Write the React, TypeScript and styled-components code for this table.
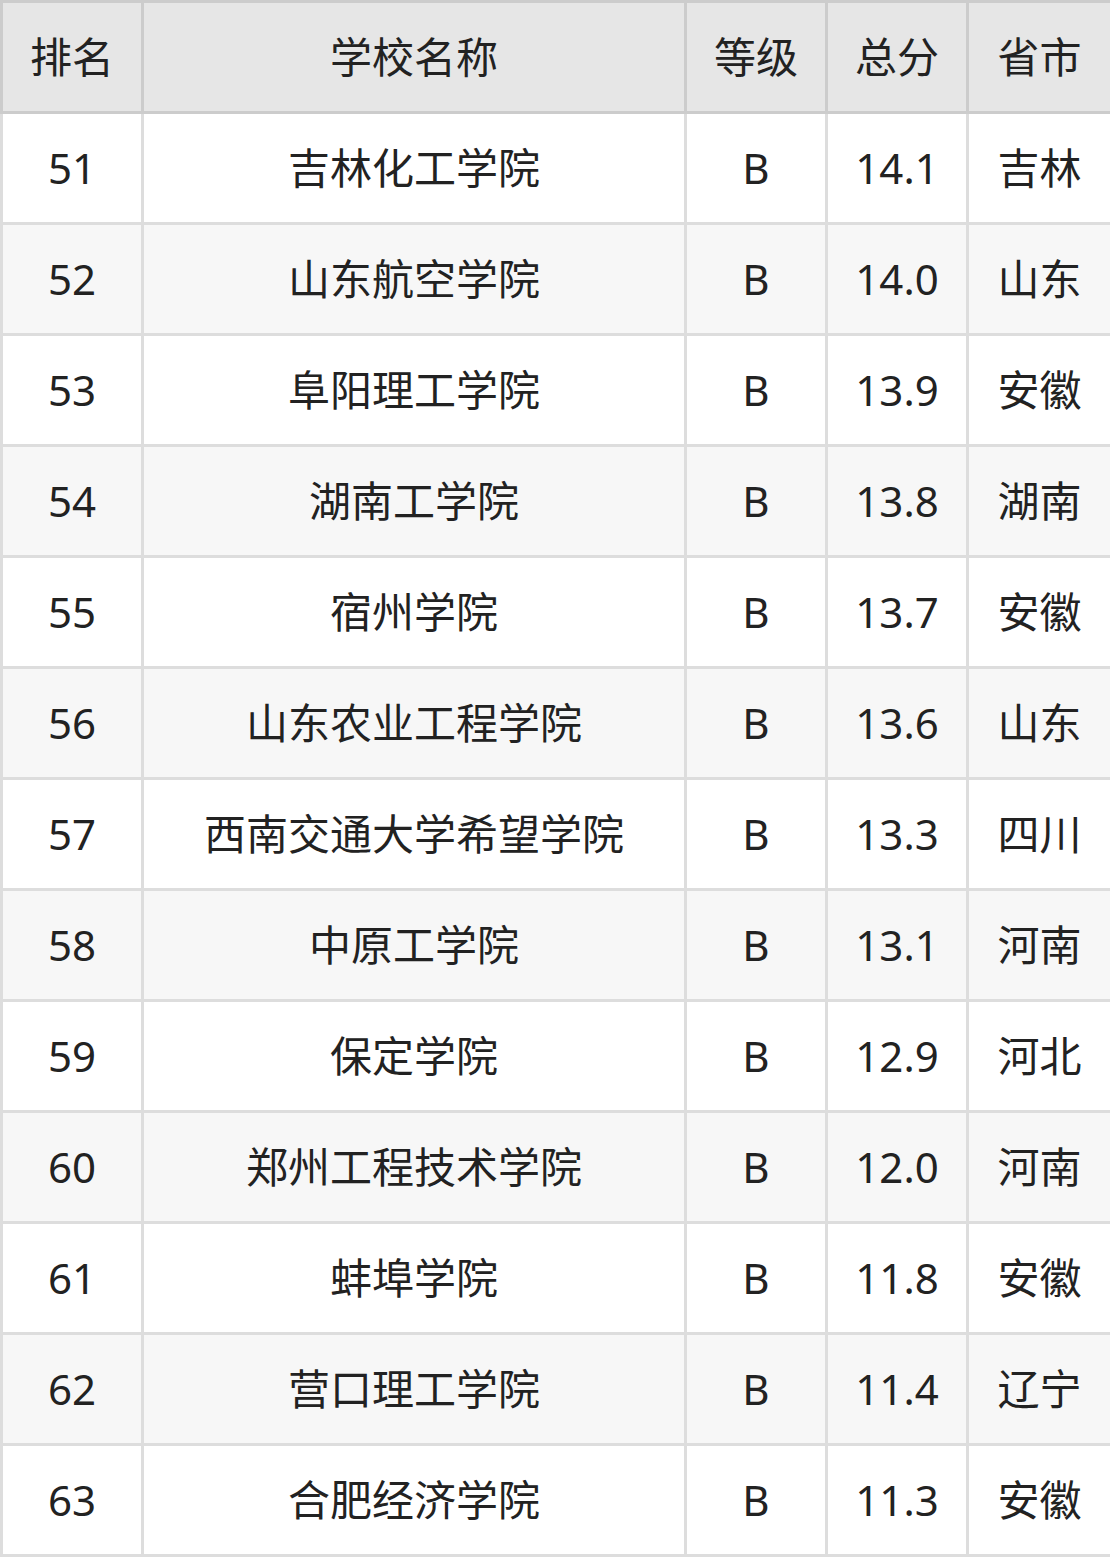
import React from 'react';
import styled, {createGlobalStyle} from 'styled-components';

type Row = {
  rank: number;
  name: string;
  grade: string;
  score: string;
  province: string;
};

const rows: Row[] = [
  {rank: 51, name: '吉林化工学院', grade: 'B', score: '14.1', province: '吉林'},
  {rank: 52, name: '山东航空学院', grade: 'B', score: '14.0', province: '山东'},
  {rank: 53, name: '阜阳理工学院', grade: 'B', score: '13.9', province: '安徽'},
  {rank: 54, name: '湖南工学院', grade: 'B', score: '13.8', province: '湖南'},
  {rank: 55, name: '宿州学院', grade: 'B', score: '13.7', province: '安徽'},
  {rank: 56, name: '山东农业工程学院', grade: 'B', score: '13.6', province: '山东'},
  {rank: 57, name: '西南交通大学希望学院', grade: 'B', score: '13.3', province: '四川'},
  {rank: 58, name: '中原工学院', grade: 'B', score: '13.1', province: '河南'},
  {rank: 59, name: '保定学院', grade: 'B', score: '12.9', province: '河北'},
  {rank: 60, name: '郑州工程技术学院', grade: 'B', score: '12.0', province: '河南'},
  {rank: 61, name: '蚌埠学院', grade: 'B', score: '11.8', province: '安徽'},
  {rank: 62, name: '营口理工学院', grade: 'B', score: '11.4', province: '辽宁'},
  {rank: 63, name: '合肥经济学院', grade: 'B', score: '11.3', province: '安徽'},
];

const GlobalStyle = createGlobalStyle`
  html, body {
    margin: 0;
    padding: 0;
    background: #ffffff;
  }
  body {
    font-family: "Noto Sans", "Noto Sans CJK SC", sans-serif;
    color: #222222;
  }
`;

export default function App() {
  return (
    <>
      <GlobalStyle />
      <Table>
        <colgroup>
          <Col $w={141} />
          <Col $w={543} />
          <Col $w={141} />
          <Col $w={141} />
          <Col $w={144} />
        </colgroup>
        <thead>
          <tr>
            <HeadCell>排名</HeadCell>
            <HeadCell>学校名称</HeadCell>
            <HeadCell>等级</HeadCell>
            <HeadCell>总分</HeadCell>
            <HeadCell>省市</HeadCell>
          </tr>
        </thead>
        <tbody>
          {rows.map((r, i) => (
            <BodyRow key={r.rank} $striped={i % 2 === 1}>
              <Cell>{r.rank}</Cell>
              <Cell>{r.name}</Cell>
              <Cell>{r.grade}</Cell>
              <Cell>{r.score}</Cell>
              <Cell>{r.province}</Cell>
            </BodyRow>
          ))}
        </tbody>
      </Table>
    </>
  );
}

const Table = styled.table`
  width: 1110px;
  border-collapse: collapse;
  table-layout: fixed;
  font-size: 42px;
  line-height: 1;
`;

const Col = styled.col<{$w: number}>`
  width: ${(p) => p.$w}px;
`;

const HeadCell = styled.th`
  height: 108px;
  padding: 0;
  border: 3px solid #cccccc;
  background: #e6e6e6;
  font-weight: 400;
  text-align: center;
  vertical-align: middle;
  white-space: nowrap;
`;

const BodyRow = styled.tr<{$striped: boolean}>`
  background: ${(p) => (p.$striped ? '#f7f7f7' : '#ffffff')};
`;

const Cell = styled.td`
  height: 108px;
  padding: 0;
  border: 3px solid #dddddd;
  text-align: center;
  vertical-align: middle;
  white-space: nowrap;
`;
